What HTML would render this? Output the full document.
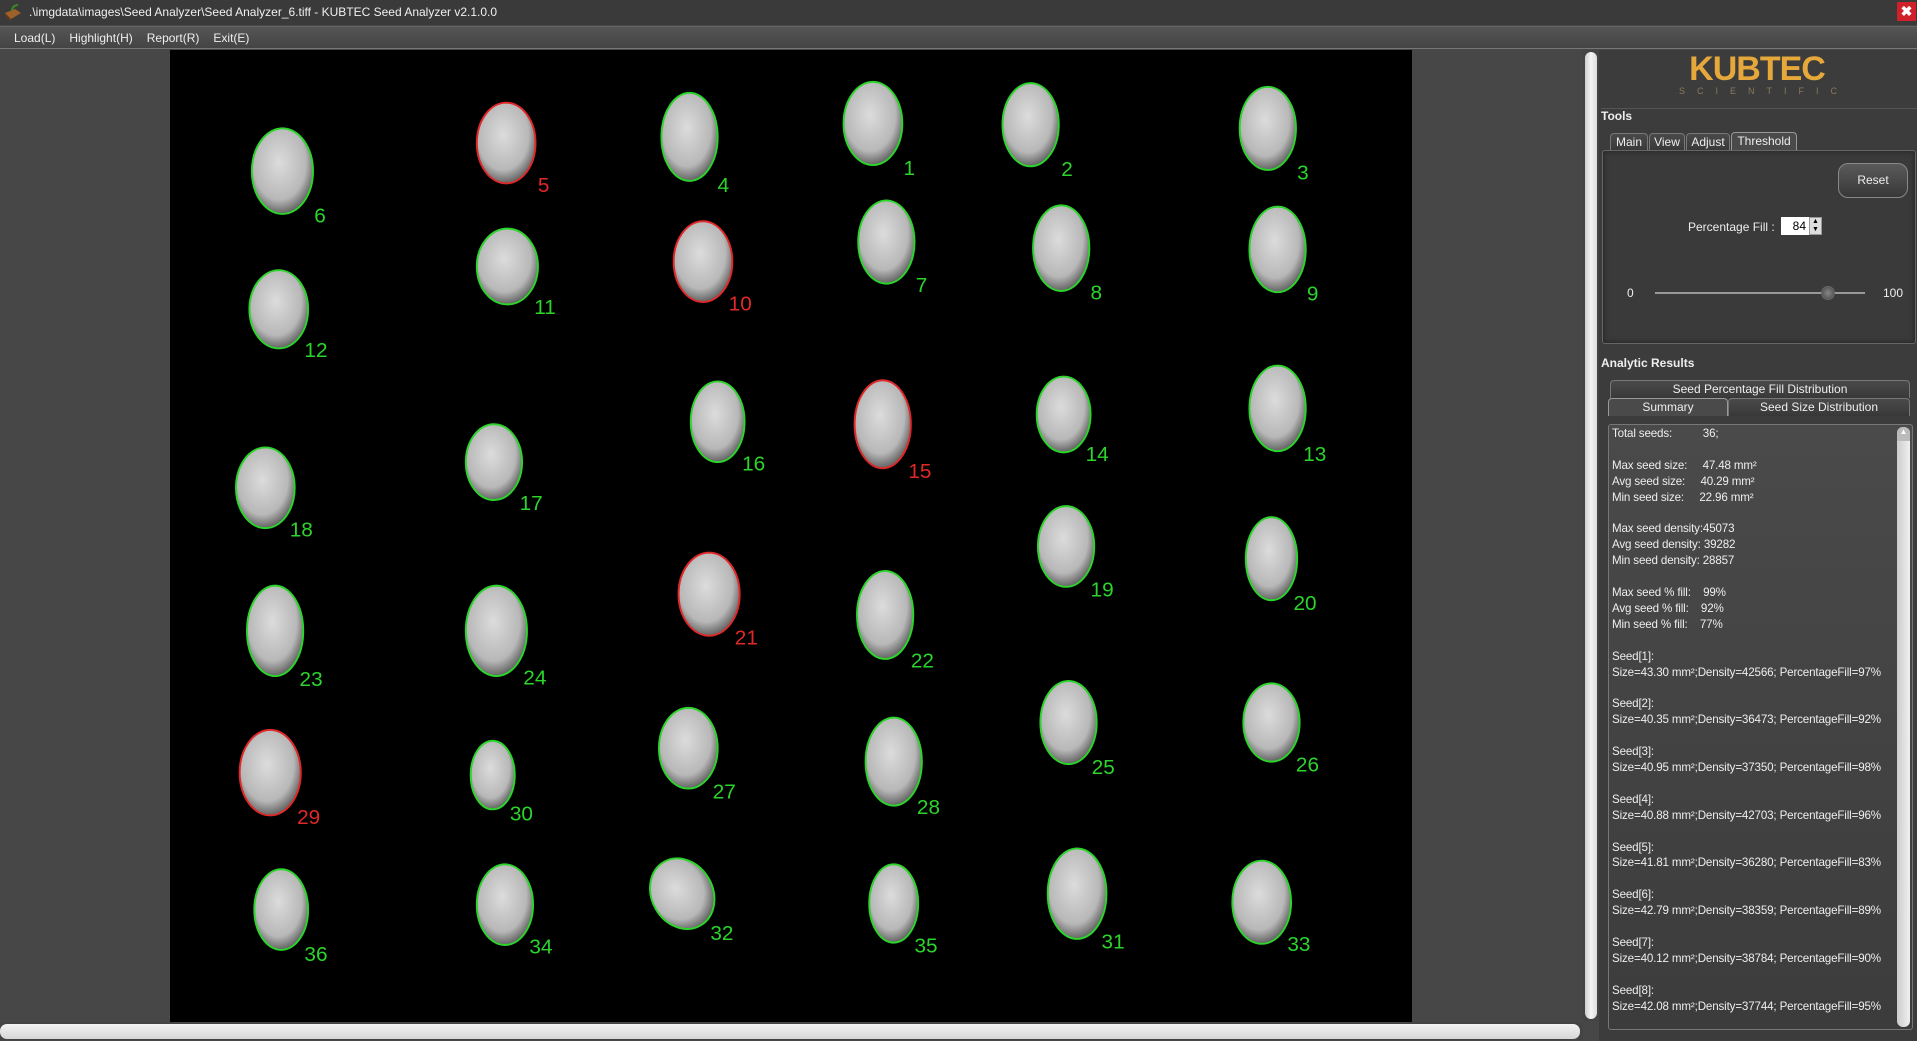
<!DOCTYPE html>
<html><head><meta charset="utf-8"><style>
*{margin:0;padding:0;box-sizing:border-box}
body{width:1917px;height:1041px;overflow:hidden;background:#474747;font-family:"Liberation Sans",sans-serif;position:relative;color:#eee}
.abs{position:absolute}
#title{left:0;top:0;width:1917px;height:25px;background:#3a3a3a;font-size:12px;line-height:25px;color:#f0f0f0}
#menu{left:0;top:26px;width:1917px;height:23px;background:linear-gradient(#555,#444);border-top:1px solid #666;border-bottom:1px solid #777;font-size:12px;line-height:22px}
#menu span{margin-left:14px}
#img{left:170px;top:50px;width:1242px;height:972px;background:#000}
#vs{left:1583px;top:50px;width:16px;height:971px;background:#444}
#vs div{position:absolute;left:2px;top:2px;width:12px;height:967px;border-radius:6px;background:linear-gradient(90deg,#cfcfcf,#f4f4f4,#ddd)}
#hs{left:0;top:1023px;width:1583px;height:17px;background:#444}
#hs div{position:absolute;left:0;top:1px;width:1580px;height:15px;border-radius:7px;background:linear-gradient(#f4f4f4,#d6d6d6)}
#rp{left:1599px;top:50px;width:318px;height:991px;background:#3c3c3c}
.tab{position:absolute;height:18px;font-size:12px;line-height:17px;text-align:center;border:1px solid #777;border-bottom:none;border-radius:4px 4px 0 0;background:linear-gradient(#4a4a4a,#383838)}
.txt{font-size:11.6px;line-height:15.9px;white-space:pre;letter-spacing:-0.15px}
</style></head><body>
<div id="title" class="abs"><svg class="abs" style="left:3px;top:3px" width="20" height="19"><path d="M2 10 L12 6 L18 10 L8 16 Z" fill="#a0602a"/><path d="M2 10 L8 16 L8 18 L2 12Z" fill="#6b3a14"/><path d="M9 8 C9 4 12 2 15 2" stroke="#3a8a2a" stroke-width="2" fill="none"/></svg><span style="position:absolute;left:29px">.\imgdata\images\Seed Analyzer\Seed Analyzer_6.tiff - KUBTEC Seed Analyzer v2.1.0.0</span>
<div class="abs" style="left:1897px;top:2px;width:19px;height:19px;background:#d0202a;color:#fff;font-weight:bold;font-size:14px;line-height:18px;text-align:center">✖</div></div>
<div id="menu" class="abs"><span>Load(L)</span><span>Highlight(H)</span><span>Report(R)</span><span>Exit(E)</span></div>
<div id="img" class="abs"></div>
<div id="vs" class="abs"><div></div></div>
<div id="hs" class="abs"><div></div></div>

<svg class="abs" style="left:0;top:0" width="1917" height="1041" viewBox="0 0 1568 851.5">
<defs><radialGradient id="g" cx="45%" cy="40%" r="62%"><stop offset="0" stop-color="#dcdcdc"/><stop offset=".7" stop-color="#b8b8b8"/><stop offset="1" stop-color="#5a5a5a"/></radialGradient></defs>
<g id="seeds" stroke-width="1.6" font-family="Liberation Sans" font-size="17">
<ellipse cx="231" cy="140" rx="25" ry="35" fill="url(#g)" stroke="#2bd52b"/><text x="257" y="182" fill="#2bd52b" stroke="none">6</text>
<ellipse cx="414" cy="117" rx="24" ry="33" fill="url(#g)" stroke="#e02828"/><text x="440" y="157" fill="#e02828" stroke="none">5</text>
<ellipse cx="564" cy="112" rx="23" ry="36" fill="url(#g)" stroke="#2bd52b"/><text x="587" y="157" fill="#2bd52b" stroke="none">4</text>
<ellipse cx="714" cy="101" rx="24" ry="34" fill="url(#g)" stroke="#2bd52b"/><text x="739" y="143" fill="#2bd52b" stroke="none">1</text>
<ellipse cx="843" cy="102" rx="23" ry="34" fill="url(#g)" stroke="#2bd52b"/><text x="868" y="144" fill="#2bd52b" stroke="none">2</text>
<ellipse cx="1037" cy="105" rx="23" ry="34" fill="url(#g)" stroke="#2bd52b"/><text x="1061" y="147" fill="#2bd52b" stroke="none">3</text>
<ellipse cx="228" cy="253" rx="24" ry="32" fill="url(#g)" stroke="#2bd52b"/><text x="249" y="292" fill="#2bd52b" stroke="none">12</text>
<ellipse cx="415" cy="218" rx="25" ry="31" fill="url(#g)" stroke="#2bd52b"/><text x="437" y="257" fill="#2bd52b" stroke="none">11</text>
<ellipse cx="575" cy="214" rx="24" ry="33" fill="url(#g)" stroke="#e02828"/><text x="596" y="254" fill="#e02828" stroke="none">10</text>
<ellipse cx="725" cy="198" rx="23" ry="34" fill="url(#g)" stroke="#2bd52b"/><text x="749" y="239" fill="#2bd52b" stroke="none">7</text>
<ellipse cx="868" cy="203" rx="23" ry="35" fill="url(#g)" stroke="#2bd52b"/><text x="892" y="245" fill="#2bd52b" stroke="none">8</text>
<ellipse cx="1045" cy="204" rx="23" ry="35" fill="url(#g)" stroke="#2bd52b"/><text x="1069" y="246" fill="#2bd52b" stroke="none">9</text>
<ellipse cx="217" cy="399" rx="24" ry="33" fill="url(#g)" stroke="#2bd52b"/><text x="237" y="439" fill="#2bd52b" stroke="none">18</text>
<ellipse cx="404" cy="378" rx="23" ry="31" fill="url(#g)" stroke="#2bd52b"/><text x="425" y="417" fill="#2bd52b" stroke="none">17</text>
<ellipse cx="587" cy="345" rx="22" ry="33" fill="url(#g)" stroke="#2bd52b"/><text x="607" y="385" fill="#2bd52b" stroke="none">16</text>
<ellipse cx="722" cy="347" rx="23" ry="36" fill="url(#g)" stroke="#e02828"/><text x="743" y="391" fill="#e02828" stroke="none">15</text>
<ellipse cx="870" cy="339" rx="22" ry="31" fill="url(#g)" stroke="#2bd52b"/><text x="888" y="377" fill="#2bd52b" stroke="none">14</text>
<ellipse cx="1045" cy="334" rx="23" ry="35" fill="url(#g)" stroke="#2bd52b"/><text x="1066" y="377" fill="#2bd52b" stroke="none">13</text>
<ellipse cx="872" cy="447" rx="23" ry="33" fill="url(#g)" stroke="#2bd52b"/><text x="892" y="488" fill="#2bd52b" stroke="none">19</text>
<ellipse cx="1040" cy="457" rx="21" ry="34" fill="url(#g)" stroke="#2bd52b"/><text x="1058" y="499" fill="#2bd52b" stroke="none">20</text>
<ellipse cx="580" cy="486" rx="25" ry="34" fill="url(#g)" stroke="#e02828"/><text x="601" y="527" fill="#e02828" stroke="none">21</text>
<ellipse cx="724" cy="503" rx="23" ry="36" fill="url(#g)" stroke="#2bd52b"/><text x="745" y="546" fill="#2bd52b" stroke="none">22</text>
<ellipse cx="225" cy="516" rx="23" ry="37" fill="url(#g)" stroke="#2bd52b"/><text x="245" y="561" fill="#2bd52b" stroke="none">23</text>
<ellipse cx="406" cy="516" rx="25" ry="37" fill="url(#g)" stroke="#2bd52b"/><text x="428" y="560" fill="#2bd52b" stroke="none">24</text>
<ellipse cx="874" cy="591" rx="23" ry="34" fill="url(#g)" stroke="#2bd52b"/><text x="893" y="633" fill="#2bd52b" stroke="none">25</text>
<ellipse cx="1040" cy="591" rx="23" ry="32" fill="url(#g)" stroke="#2bd52b"/><text x="1060" y="631" fill="#2bd52b" stroke="none">26</text>
<ellipse cx="563" cy="612" rx="24" ry="33" fill="url(#g)" stroke="#2bd52b"/><text x="583" y="653" fill="#2bd52b" stroke="none">27</text>
<ellipse cx="731" cy="623" rx="23" ry="36" fill="url(#g)" stroke="#2bd52b"/><text x="750" y="666" fill="#2bd52b" stroke="none">28</text>
<ellipse cx="221" cy="632" rx="25" ry="35" fill="url(#g)" stroke="#e02828"/><text x="243" y="674" fill="#e02828" stroke="none">29</text>
<ellipse cx="403" cy="634" rx="18" ry="28" fill="url(#g)" stroke="#2bd52b"/><text x="417" y="671" fill="#2bd52b" stroke="none">30</text>
<ellipse cx="881" cy="731" rx="24" ry="37" fill="url(#g)" stroke="#2bd52b"/><text x="901" y="776" fill="#2bd52b" stroke="none">31</text>
<ellipse cx="558" cy="731" rx="25" ry="30" fill="url(#g)" stroke="#2bd52b" transform="rotate(-30 558 731)"/><text x="581" y="769" fill="#2bd52b" stroke="none">32</text>
<ellipse cx="1032" cy="738" rx="24" ry="34" fill="url(#g)" stroke="#2bd52b"/><text x="1053" y="778" fill="#2bd52b" stroke="none">33</text>
<ellipse cx="413" cy="740" rx="23" ry="33" fill="url(#g)" stroke="#2bd52b"/><text x="433" y="780" fill="#2bd52b" stroke="none">34</text>
<ellipse cx="731" cy="739" rx="20" ry="32" fill="url(#g)" stroke="#2bd52b"/><text x="748" y="779" fill="#2bd52b" stroke="none">35</text>
<ellipse cx="230" cy="744" rx="22" ry="33" fill="url(#g)" stroke="#2bd52b"/><text x="249" y="786" fill="#2bd52b" stroke="none">36</text>
</g></svg>

<div id="rp" class="abs">
<div class="abs" style="left:78px;top:2px;width:160px;text-align:center;color:#e6a83a;font-weight:bold;font-size:34px;line-height:34px;letter-spacing:-1px">KUBTEC</div>
<div class="abs" style="left:80px;top:36px;width:160px;text-align:center;color:#8a7a5a;font-size:9px;letter-spacing:12px">SCIENTIFIC</div>
<div class="abs" style="left:2px;top:58px;width:316px;border-top:1px solid #555"></div>
<div class="abs" style="left:2px;top:59px;font-weight:bold;font-size:12px">Tools</div>
<div class="tab" style="left:11px;top:83px;width:38px">Main</div>
<div class="tab" style="left:50px;top:83px;width:36px">View</div>
<div class="tab" style="left:87px;top:83px;width:44px">Adjust</div>
<div class="tab" style="left:132px;top:82px;width:66px;height:19px;background:#4a4a4a;border-color:#999">Threshold</div>
<div class="abs" style="left:3px;top:100px;width:314px;height:194px;border:1px solid #666;border-radius:3px;background:#3a3a3a;box-shadow:inset 0 0 6px #222"></div>
<div class="abs" style="left:239px;top:113px;width:70px;height:35px;border:1px solid #888;border-radius:10px;background:linear-gradient(#5a5a5a,#383838);font-size:12px;line-height:33px;text-align:center">Reset</div>
<div class="abs" style="left:89px;top:170px;font-size:12px">Percentage Fill :</div>
<div class="abs" style="left:182px;top:167px;width:28px;height:18px;background:#fff;color:#000;font-size:12px;line-height:18px;text-align:right;padding-right:3px">84</div>
<div class="abs" style="left:210px;top:167px;width:13px;height:18px;background:#ddd;border:1px solid #999;color:#000;font-size:7px;line-height:8px;text-align:center">▲<br>▼</div>
<div class="abs" style="left:28px;top:236px;font-size:12px">0</div>
<div class="abs" style="left:56px;top:242px;width:210px;height:2px;background:#999"></div>
<div class="abs" style="left:222px;top:236px;width:14px;height:14px;border-radius:7px;background:radial-gradient(#888,#444);border:1px solid #666"></div>
<div class="abs" style="left:284px;top:236px;font-size:12px">100</div>
<div class="abs" style="left:2px;top:306px;font-weight:bold;font-size:12px">Analytic Results</div>
<div class="tab" style="left:11px;top:330px;width:300px;height:18px">Seed Percentage Fill Distribution</div>
<div class="tab" style="left:9px;top:348px;width:120px;background:#4a4a4a;border-color:#999">Summary</div>
<div class="tab" style="left:129px;top:348px;width:182px">Seed Size Distribution</div>
<div class="abs" style="left:9px;top:374px;width:305px;height:606px;border:1px solid #777;border-radius:3px;background:linear-gradient(#4a4a4a,#3c3c3c);overflow:hidden">
<div class="abs" style="right:2px;top:2px;width:13px;height:600px;border-radius:6px;background:linear-gradient(90deg,#ccc,#f0f0f0)"></div>
<div class="abs" style="right:2px;top:2px;width:13px;height:14px;border-radius:6px 6px 0 0;background:#bbb;color:#fff;font-size:8px;text-align:center">▲</div>
<div class="abs txt" style="left:3px;top:1px">Total seeds:          36;

Max seed size:     47.48 mm²
Avg seed size:     40.29 mm²
Min seed size:     22.96 mm²

Max seed density:45073
Avg seed density: 39282
Min seed density: 28857

Max seed % fill:    99%
Avg seed % fill:    92%
Min seed % fill:    77%

Seed[1]:
Size=43.30 mm²;Density=42566; PercentageFill=97%

Seed[2]:
Size=40.35 mm²;Density=36473; PercentageFill=92%

Seed[3]:
Size=40.95 mm²;Density=37350; PercentageFill=98%

Seed[4]:
Size=40.88 mm²;Density=42703; PercentageFill=96%

Seed[5]:
Size=41.81 mm²;Density=36280; PercentageFill=83%

Seed[6]:
Size=42.79 mm²;Density=38359; PercentageFill=89%

Seed[7]:
Size=40.12 mm²;Density=38784; PercentageFill=90%

Seed[8]:
Size=42.08 mm²;Density=37744; PercentageFill=95%</div>
</div>
</div>
</body></html>
